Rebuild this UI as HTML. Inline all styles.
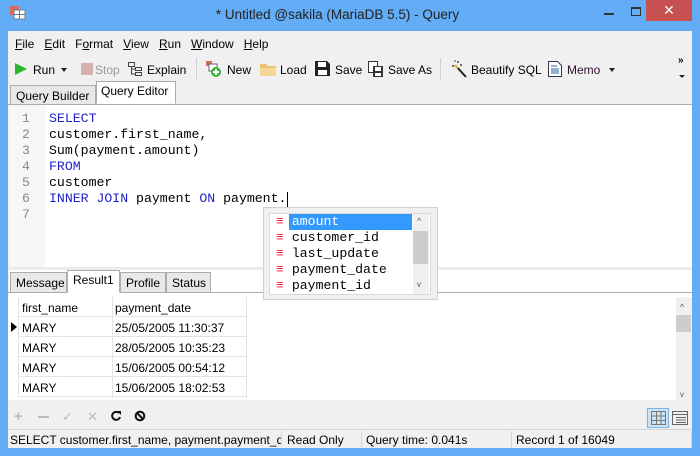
<!DOCTYPE html>
<html><head><style>
*{margin:0;padding:0;box-sizing:border-box}
body{width:700px;height:456px;background:#62adf5;font-family:"Liberation Sans",sans-serif;font-size:12px;color:#000;position:relative;overflow:hidden}
.a{position:absolute}
.client{left:8px;top:31px;width:684px;height:417px;background:#f0f0f0}
.mono{font-family:"Liberation Mono",monospace;font-size:13.2px}
u{text-decoration:underline}
.tab{position:absolute;border:1px solid #acacac;background:#e8e8e8;height:21px;padding:3px 5px 0;font-size:12px}
.tab.on{background:#fff;border-bottom-color:#fff;height:23px;top:-2px;padding-top:2px}
.row{position:absolute;left:12px;height:20px;border-bottom:1px solid #e4e4e4;width:227px}
.row span{position:absolute;top:4px}
</style></head><body>
<svg class="a" style="left:10px;top:6px" width="16" height="14"><rect x="0" y="0" width="9" height="9" fill="#e06a5a"/><rect x="4" y="4" width="11" height="9" fill="#fff" stroke="#6a7f96"/><line x1="4" y1="8.5" x2="15" y2="8.5" stroke="#6a7f96"/><line x1="9.5" y1="4" x2="9.5" y2="13" stroke="#6a7f96"/></svg>
<div class="a" style="left:0;width:675px;top:7px;text-align:center;font-size:13.5px;color:#222">* Untitled @sakila (MariaDB 5.5) - Query</div>
<div class="a" style="left:604px;top:13px;width:10px;height:2px;background:#333"></div>
<div class="a" style="left:631px;top:7px;width:10px;height:9px;border:1px solid #333;border-top-width:2px"></div>
<div class="a" style="left:646px;top:0;width:46px;height:21px;background:#c75050;color:#fff;text-align:center;font-size:14px;line-height:21px">✕</div>
<div class="a client"></div>
<div class="a" style="left:15px;top:37px">
<span><u>F</u>ile</span>&nbsp;&nbsp;&nbsp;<span><u>E</u>dit</span>&nbsp;&nbsp;&nbsp;<span>F<u>o</u>rmat</span>&nbsp;&nbsp;&nbsp;<span><u>V</u>iew</span>&nbsp;&nbsp;&nbsp;<span><u>R</u>un</span>&nbsp;&nbsp;&nbsp;<span><u>W</u>indow</span>&nbsp;&nbsp;&nbsp;<span><u>H</u>elp</span></div>
<svg class="a" style="left:14px;top:62px" width="14" height="14"><path d="M1 1L13 7L1 13Z" fill="#2db52d"/></svg>
<div class="a" style="left:33px;top:63px">Run</div>
<div class="a" style="left:61px;top:68px;border:3px solid transparent;border-top:4px solid #222"></div>
<div class="a" style="left:81px;top:63px;width:12px;height:12px;background:#d7b1b1"></div>
<div class="a" style="left:95px;top:63px;color:#999">Stop</div>
<svg class="a" style="left:127px;top:61px" width="16" height="16" fill="none" stroke="#444"><rect x="1.5" y="1.5" width="6" height="4"/><rect x="8.5" y="6.5" width="6" height="3"/><rect x="8.5" y="11.5" width="6" height="3"/><path d="M4.5 5.5V13H8.5M4.5 8H8.5"/></svg>
<div class="a" style="left:147px;top:63px">Explain</div>
<div class="a" style="left:196px;top:58px;width:1px;height:22px;background:#d0d0d0"></div>
<svg class="a" style="left:206px;top:61px" width="16" height="16"><rect x="0" y="0" width="6" height="5" fill="#d86a5a"/><rect x="3" y="3" width="8" height="7" fill="#fff" stroke="#667"/><circle cx="10" cy="11" r="5" fill="#3cb43c"/><path d="M10 8v6M7 11h6" stroke="#fff" stroke-width="2"/></svg>
<div class="a" style="left:227px;top:63px">New</div>
<svg class="a" style="left:260px;top:62px" width="17" height="14"><path d="M0 2h6l2 2h8v10H0Z" fill="#e9c46e"/><path d="M0 6h16v8H0Z" fill="#f4d898"/></svg>
<div class="a" style="left:280px;top:63px">Load</div>
<svg class="a" style="left:315px;top:61px" width="15" height="15"><path d="M0 0h12l3 3v12H0Z" fill="#222"/><rect x="3" y="1" width="8" height="5" fill="#fff"/><rect x="3" y="9" width="9" height="5" fill="#fff"/></svg>
<div class="a" style="left:335px;top:63px">Save</div>
<svg class="a" style="left:368px;top:61px" width="16" height="16"><rect x="0.5" y="0.5" width="9" height="11" fill="#fff" stroke="#333"/><path d="M5 5h10v11H5Z" fill="#333"/><rect x="7" y="6" width="6" height="4" fill="#fff"/><rect x="7" y="12" width="6" height="3" fill="#fff"/></svg>
<div class="a" style="left:388px;top:63px">Save As</div>
<div class="a" style="left:440px;top:58px;width:1px;height:22px;background:#d0d0d0"></div>
<svg class="a" style="left:450px;top:60px" width="18" height="18"><path d="M5 5L16 17" stroke="#222" stroke-width="2"/><path d="M5 5L8 8" stroke="#e8c020" stroke-width="2"/><circle cx="3" cy="6" r="1" fill="#444"/><circle cx="8" cy="2" r="1" fill="#444"/><circle cx="11" cy="5" r="1" fill="#444"/><circle cx="5" cy="1" r="0.8" fill="#444"/></svg>
<div class="a" style="left:471px;top:63px">Beautify SQL</div>
<svg class="a" style="left:548px;top:61px" width="14" height="16"><path d="M0.5 0.5h9l4 4v11H0.5Z" fill="#fff" stroke="#335"/><path d="M3 5h6M3 8h8M3 10h8M3 12h8" stroke="#3060a0"/></svg>
<div class="a" style="left:567px;top:63px;color:#301030">Memo</div>
<div class="a" style="left:609px;top:68px;border:3px solid transparent;border-top:4px solid #222"></div>
<div class="a" style="left:678px;top:55px;font-size:10px;font-weight:bold">»</div>
<div class="a" style="left:679px;top:75px;border:3px solid transparent;border-top:3px solid #222"></div>
<div class="a" style="left:8px;top:83px;width:684px;height:22px">
<div class="tab" style="left:2px;top:2px;width:86px;height:20px">Query Builder</div>
<div class="tab on" style="left:88px;width:80px;padding-left:4px">Query Editor</div>
</div>
<div class="a" style="left:8px;top:104px;width:684px;height:1px;background:#acacac"></div>
<div class="a" style="left:9px;top:105px;width:683px;height:162px;background:#fff"></div>
<div class="a" style="left:9px;top:105px;width:37px;height:162px;background:#f7f7f7"></div>
<div class="a mono" style="left:22px;top:111px;line-height:16px;color:#888">1<br>2<br>3<br>4<br>5<br>6<br>7</div>
<div class="a mono" style="left:49px;top:111px;line-height:16px;white-space:pre"><span style="color:#2020d0">SELECT</span>
customer.first_name,
Sum(payment.amount)
<span style="color:#2020d0">FROM</span>
customer
<span style="color:#2020d0">INNER JOIN</span> payment <span style="color:#2020d0">ON</span> payment.</div>
<div class="a" style="left:287px;top:192px;width:1px;height:15px;background:#000"></div>
<div class="a" style="left:9px;top:267px;width:683px;height:3px;background:#ececec"></div>
<div class="a" style="left:9px;top:270px;width:683px;height:27px;background:#fff"></div>
<div class="a" style="left:8px;top:292px;width:684px;height:1px;background:#acacac"></div>
<div class="tab" style="left:10px;top:272px;width:57px">Message</div>
<div class="tab on" style="left:67px;top:270px;width:53px;height:23px">Result1</div>
<div class="tab" style="left:120px;top:272px;width:46px">Profile</div>
<div class="tab" style="left:166px;top:272px;width:45px">Status</div>
<div class="a" style="left:9px;top:293px;width:667px;height:107px;background:#fff"></div>
<div class="a" style="left:8px;top:297px;width:11px;height:101px;background:#fff;border-right:1px solid #e4e4e4"></div>
<div class="a" style="left:8px;top:297px;width:239px;height:101px">
<div class="row" style="top:0;background:#fff"><span style="left:2px">first_name</span><span style="left:95px">payment_date</span></div>
<div class="row" style="top:20px"><span style="left:2px">MARY</span><span style="left:95px">25/05/2005 11:30:37</span></div>
<div class="row" style="top:40px"><span style="left:2px">MARY</span><span style="left:95px">28/05/2005 10:35:23</span></div>
<div class="row" style="top:60px"><span style="left:2px">MARY</span><span style="left:95px">15/06/2005 00:54:12</span></div>
<div class="row" style="top:80px"><span style="left:2px">MARY</span><span style="left:95px">15/06/2005 18:02:53</span></div>
<div class="a" style="left:104px;top:0;width:1px;height:101px;background:#e4e4e4"></div>
<div class="a" style="left:238px;top:0;width:1px;height:101px;background:#e4e4e4"></div>
</div>
<div class="a" style="left:11px;top:322px;border:5px solid transparent;border-left:6px solid #000;border-right:0"></div>
<div class="a" style="left:676px;top:297px;width:16px;height:103px;background:#f0f0f0"></div>
<div class="a" style="left:676px;top:315px;width:15px;height:17px;background:#cdcdcd"></div>
<div class="a" style="left:680px;top:302px;font-size:9px;color:#555">^</div>
<div class="a" style="left:680px;top:390px;font-size:8px;color:#555">v</div>
<div class="a" style="left:14px;top:410px;color:#bbb;font-size:15px;font-weight:bold;line-height:14px">+</div>
<div class="a" style="left:38px;top:416px;width:11px;height:2px;background:#bbb"></div>
<div class="a" style="left:62px;top:409px;color:#bbb;font-size:13px">✓</div>
<div class="a" style="left:87px;top:409px;color:#bbb;font-size:13px">✕</div>
<svg class="a" style="left:110px;top:410px" width="12" height="12"><path d="M9 3A4 4 0 1 0 10 7" fill="none" stroke="#111" stroke-width="2"/><path d="M7 1h4v4Z" fill="#111"/></svg>
<svg class="a" style="left:134px;top:410px" width="12" height="12"><circle cx="6" cy="6" r="4.3" fill="none" stroke="#111" stroke-width="2"/><path d="M3 3L9 9" stroke="#111" stroke-width="2"/></svg>
<div class="a" style="left:647px;top:408px;width:22px;height:20px;background:#cce4f7;border:1px solid #7ab4e6"></div>
<svg class="a" style="left:651px;top:411px" width="15" height="14" fill="none" stroke="#777"><rect x=".5" y=".5" width="14" height="13"/><path d="M5.5 0v14M10 0v14M0 5h15M0 9.5h15"/></svg>
<svg class="a" style="left:672px;top:411px" width="16" height="14" fill="none" stroke="#666"><rect x=".5" y=".5" width="15" height="13"/><path d="M0 3.5h16M4 6.5h10M4 9h10M4 11.5h10"/></svg>
<div class="a" style="left:8px;top:429px;width:684px;height:1px;background:#d4d4d4"></div>
<div class="a" style="left:10px;top:433px;width:271px;overflow:hidden;white-space:nowrap">SELECT customer.first_name, payment.payment_date</div>
<div class="a" style="left:281px;top:431px;width:1px;height:16px;background:#d4d4d4"></div>
<div class="a" style="left:287px;top:433px">Read Only</div>
<div class="a" style="left:361px;top:431px;width:1px;height:16px;background:#d4d4d4"></div>
<div class="a" style="left:366px;top:433px">Query time: 0.041s</div>
<div class="a" style="left:511px;top:431px;width:1px;height:16px;background:#d4d4d4"></div>
<div class="a" style="left:516px;top:433px">Record 1 of 16049</div>
<div class="a" style="left:691px;top:431px;width:1px;height:16px;background:#d4d4d4"></div>
<div class="a" style="left:263px;top:207px;width:175px;height:93px;background:#f0f0f0;border:1px solid #d0d0d0"></div>
<div class="a" style="left:269px;top:213px;width:162px;height:82px;background:#fff;border:1px solid #d8d8d8"></div>
<div class="a" style="left:413px;top:214px;width:16px;height:80px;background:#f0f0f0"></div>
<div class="a" style="left:413px;top:231px;width:15px;height:33px;background:#cdcdcd"></div>
<div class="a" style="left:417px;top:216px;font-size:9px;color:#555">^</div>
<div class="a" style="left:417px;top:280px;font-size:8px;color:#555">v</div>
<div class="a" style="left:289px;top:214px;width:123px;height:16px;background:#3399ff;border:1px dotted #c77020"></div>
<div class="a mono" style="left:276px;top:214px;line-height:16px;white-space:pre"><span style="color:#e02040">≡</span><span style="color:#fff"> amount</span>
<span style="color:#e02040">≡</span> customer_id
<span style="color:#e02040">≡</span> last_update
<span style="color:#e02040">≡</span> payment_date
<span style="color:#e02040">≡</span> payment_id</div>
</body></html>
